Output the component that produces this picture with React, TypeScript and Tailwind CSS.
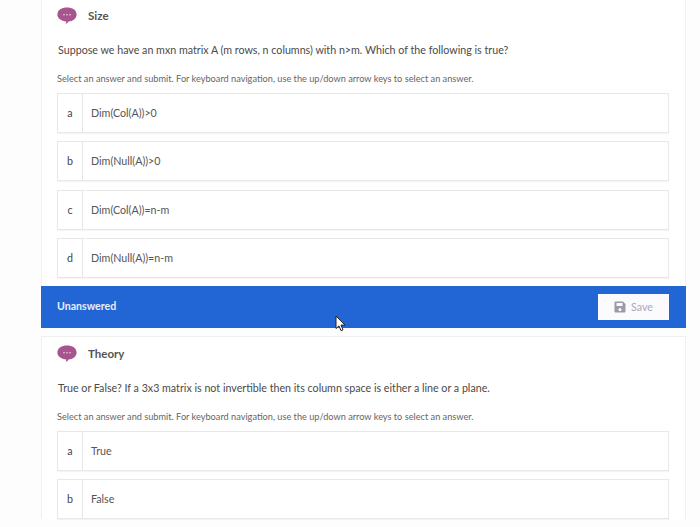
import React from "react";

function Bubble() {
  return (
    <svg width="20" height="18" viewBox="0 0 20 18" className="shrink-0">
      <path d="M10 0.6C15.3 0.6 19.6 3 19.6 7.6c0 4.2-3.9 6.8-8 7-.6 1-1.8 2-3 2.4.4-.7.6-1.5.6-2.5C4.2 14 0.4 11.6 0.4 7.6 0.4 3 4.7 0.6 10 0.6z" fill="#a8558f" />
      <circle cx="7" cy="7.8" r="0.8" fill="#ecd6e5" />
      <circle cx="10" cy="7.8" r="0.8" fill="#ecd6e5" />
      <circle cx="13" cy="7.8" r="0.8" fill="#ecd6e5" />
    </svg>
  );
}

function Option({ letter, text }: { letter: string; text: string }) {
  return (
    <div className="flex h-10 border border-[#e8e8e8] bg-white shadow-[0_1px_1px_rgba(0,0,0,0.04)]">
      <div className="w-[25px] shrink-0 border-r border-[#e6e6e6] flex items-center justify-center text-[10.7px] text-[#444]">{letter}</div>
      <div className="flex items-center pl-2 text-[10.7px] text-[#555]">{text}</div>
    </div>
  );
}

function Question({ title, question, options, titleTop }: { title: string; question: string; options: [string, string][]; titleTop: string }) {
  return (
    <div className={`w-[645px] ml-[41px] bg-white border-x border-[#f0f0f0] px-[15px] ${titleTop}`}>
      <div className="flex items-center gap-[11px] h-[18px]">
        <Bubble />
        <span className="text-[11.5px] font-bold text-[#555]">{title}</span>
      </div>
      <p className="mt-[17px] pl-[1px] h-4 leading-4 text-[10.7px] text-[#4a4a4a] whitespace-nowrap">{question}</p>
      <p className="mt-[15px] h-3 leading-3 text-[9.2px] text-[#666] whitespace-nowrap">
        Select an answer and submit. For keyboard navigation, use the up/down arrow keys to select an answer.
      </p>
      <div className="mt-[8px] flex flex-col gap-[8.34px] w-[612px]">
        {options.map(([l, t]) => (
          <Option key={l} letter={l} text={t} />
        ))}
      </div>
    </div>
  );
}

export default function App() {
  return (
    <div className="w-[700px] h-[527px] overflow-hidden bg-[#fdfdfd] font-['Lato',sans-serif] relative">
      <Question
        title="Size"
        titleTop="pt-[7px] pb-2"
        question="Suppose we have an mxn matrix A (m rows, n columns) with n>m. Which of the following is true?"
        options={[["a", "Dim(Col(A))>0"], ["b", "Dim(Null(A))>0"], ["c", "Dim(Col(A))=n-m"], ["d", "Dim(Null(A))=n-m"]]}
      />
      <div className="w-[645px] ml-[41px] h-[42px] bg-[#2266d6] flex items-center justify-between pl-4 pr-[17px]">
        <span className="text-[10.6px] font-bold text-[#e8eefb]">Unanswered</span>
        <button className="w-[71px] h-[26px] bg-[#fbfbfd] flex items-center justify-center gap-[5px] text-[10.7px] text-[#a9a9b8]">
          <svg width="12" height="12" viewBox="0 0 12 12">
            <path fillRule="evenodd" d="M1.5 0.5h7.5l2.5 2.5v7.5a1 1 0 0 1-1 1h-9a1 1 0 0 1-1-1v-9a1 1 0 0 1 1-1zM2.5 2v3h6V2zM6 7a1.6 1.6 0 1 0 0 3.2A1.6 1.6 0 0 0 6 7z" fill="#9a9aa8" />
          </svg>
          Save
        </button>
      </div>
      <div className="mt-2 ml-[41px] w-[645px] h-px bg-[#f0f0f0]" />
      <Question
        title="Theory"
        titleTop="pt-[8px]"
        question="True or False? If a 3x3 matrix is not invertible then its column space is either a line or a plane."
        options={[["a", "True"], ["b", "False"]]}
      />
      <svg className="absolute left-[335px] top-[315px]" width="11" height="17" viewBox="0 0 11 17">
        <path d="M1 1v12.5l3-2.6 2 4.8 2-.9-2-4.7h4z" fill="#fff" stroke="#222" strokeWidth="1" />
      </svg>
    </div>
  );
}
